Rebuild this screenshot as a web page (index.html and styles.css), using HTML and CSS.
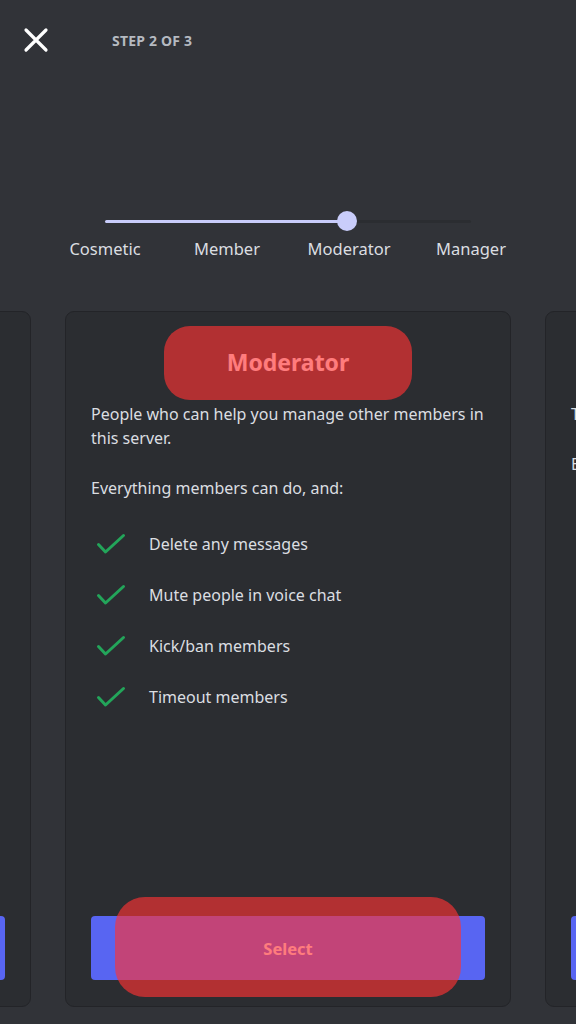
FILE: index.html
```html
<!DOCTYPE html>
<html lang="en">
<head>
<meta charset="utf-8">
<title>Step 2 of 3</title>
<link rel="stylesheet" href="styles.css">
</head>
<body>
<div class="screen">
  <header class="topbar">
    <button class="close" aria-label="Close">
      <svg width="26" height="26" viewBox="0 0 26 26"><path d="M3 3L23 23M23 3L3 23" stroke="#ffffff" stroke-width="3.2" stroke-linecap="round" fill="none"/></svg>
    </button>
    <div class="step">STEP 2 OF 3</div>
  </header>

  <section class="stepper">
    <div class="track-row">
      <div class="track">
        <div class="fill" style="width:66%"><span class="knob"></span></div>
      </div>
    </div>
    <div class="labels">
      <span>Cosmetic</span>
      <span>Member</span>
      <span>Moderator</span>
      <span>Manager</span>
    </div>
  </section>

  <section class="carousel">
    <article class="card side" aria-hidden="true">
      <h2 class="title">Member</h2>
      <p class="desc">Regular members of this server.</p>
      <p class="desc gap">Everything cosmetic roles can do, and:</p>
      <div class="spacer"></div>
      <button class="select">Select</button>
    </article>

    <article class="card current">
      <h2 class="title">Moderator</h2>
      <p class="desc">People who can help you manage other members in this server.</p>
      <p class="desc gap">Everything members can do, and:</p>
      <ul class="perks">
        <li><svg class="check" width="30" height="22" viewBox="0 0 30 22"><path d="M2.5 11.5L9.5 19L27.5 2.5" stroke="#23a55a" stroke-width="3" fill="none" stroke-linecap="round" stroke-linejoin="round"/></svg><span>Delete any messages</span></li>
        <li><svg class="check" width="30" height="22" viewBox="0 0 30 22"><path d="M2.5 11.5L9.5 19L27.5 2.5" stroke="#23a55a" stroke-width="3" fill="none" stroke-linecap="round" stroke-linejoin="round"/></svg><span>Mute people in voice chat</span></li>
        <li><svg class="check" width="30" height="22" viewBox="0 0 30 22"><path d="M2.5 11.5L9.5 19L27.5 2.5" stroke="#23a55a" stroke-width="3" fill="none" stroke-linecap="round" stroke-linejoin="round"/></svg><span>Kick/ban members</span></li>
        <li><svg class="check" width="30" height="22" viewBox="0 0 30 22"><path d="M2.5 11.5L9.5 19L27.5 2.5" stroke="#23a55a" stroke-width="3" fill="none" stroke-linecap="round" stroke-linejoin="round"/></svg><span>Timeout members</span></li>
      </ul>
      <div class="spacer"></div>
      <button class="select">Select</button>
      <span class="mark mark-title"></span>
      <span class="mark mark-button"></span>
    </article>

    <article class="card side" aria-hidden="true">
      <h2 class="title">Manager</h2>
      <p class="desc">Trusted people who help run this server.</p>
      <p class="desc gap">Everything moderators can do, and:</p>
      <div class="spacer"></div>
      <button class="select">Select</button>
    </article>
  </section>
</div>
</body>
</html>
```

FILE: styles.css
```css
* { box-sizing: border-box; }

html, body {
  margin: 0;
  padding: 0;
  background: #313338;
}

body {
  font-family: "Noto Sans", "Open Sans", sans-serif;
  color: #dbdee1;
  width: 576px;
  height: 1024px;
  overflow: hidden;
}

.screen {
  display: flex;
  flex-direction: column;
  height: 1024px;
}

.topbar {
  display: flex;
  align-items: center;
  padding: 27px 24px 27px 23px;
  height: 80px;
}

.close {
  width: 26px;
  height: 26px;
  padding: 0;
  border: 0;
  background: none;
  display: flex;
}

.step {
  margin-left: 63px;
  font-size: 14px;
  font-weight: 700;
  color: #b5bac1;
  letter-spacing: 0.2px;
}

.stepper {
  width: 488px;
  margin: 131px auto 0;
}

.track-row {
  height: 20px;
  padding: 0 61px;
  display: flex;
  align-items: center;
}

.track {
  flex: 1;
  height: 3px;
  background: #2b2d31;
  border-radius: 2px;
}

.fill {
  position: relative;
  height: 3px;
  background: #c9cdfb;
  border-radius: 2px;
}

.knob {
  position: absolute;
  right: -10px;
  top: -8.5px;
  width: 20px;
  height: 20px;
  border-radius: 50%;
  background: #c9cdfb;
}

.labels {
  display: grid;
  grid-template-columns: repeat(4, 1fr);
  margin-top: 6px;
  font-size: 16.5px;
  line-height: 24px;
  text-align: center;
  color: #dbdee1;
}

.carousel {
  display: flex;
  justify-content: center;
  gap: 34px;
  margin-top: 50px;
  overflow: hidden;
}

.card {
  position: relative;
  flex: 0 0 446px;
  height: 696px;
  background: #2b2d31;
  border: 1px solid #232428;
  border-radius: 9px;
  padding: 26px 25px 26px 25px;
  display: flex;
  flex-direction: column;
}

.title {
  margin: 0;
  font-size: 23px;
  line-height: 48px;
  font-weight: 700;
  text-align: center;
  color: #ffffff;
}

.desc {
  margin: 16px 0 0;
  font-size: 16px;
  line-height: 24px;
  color: #dbdee1;
}

.desc.gap {
  margin-top: 26px;
}

.perks {
  list-style: none;
  margin: 18px 0 0;
  padding: 0;
}

.perks li {
  display: flex;
  align-items: center;
  height: 51px;
  font-size: 16px;
  color: #dbdee1;
}

.check {
  margin-left: 5px;
  margin-right: 23px;
  flex: 0 0 auto;
}

.spacer {
  flex: 1;
}

.select {
  height: 64px;
  width: 100%;
  border: 0;
  border-radius: 4px;
  background: #5865f2;
  color: #ffffff;
  font-family: "Noto Sans", "Open Sans", sans-serif;
  font-size: 16.5px;
  font-weight: 700;
}

.mark {
  position: absolute;
  background: rgba(255, 50, 52, 0.64);
  pointer-events: none;
}

.mark-title {
  left: 98px;
  top: 14px;
  width: 248px;
  height: 74px;
  border-radius: 26px;
}

.mark-button {
  left: 49px;
  top: 585px;
  width: 346px;
  height: 100px;
  border-radius: 30px;
}
```
